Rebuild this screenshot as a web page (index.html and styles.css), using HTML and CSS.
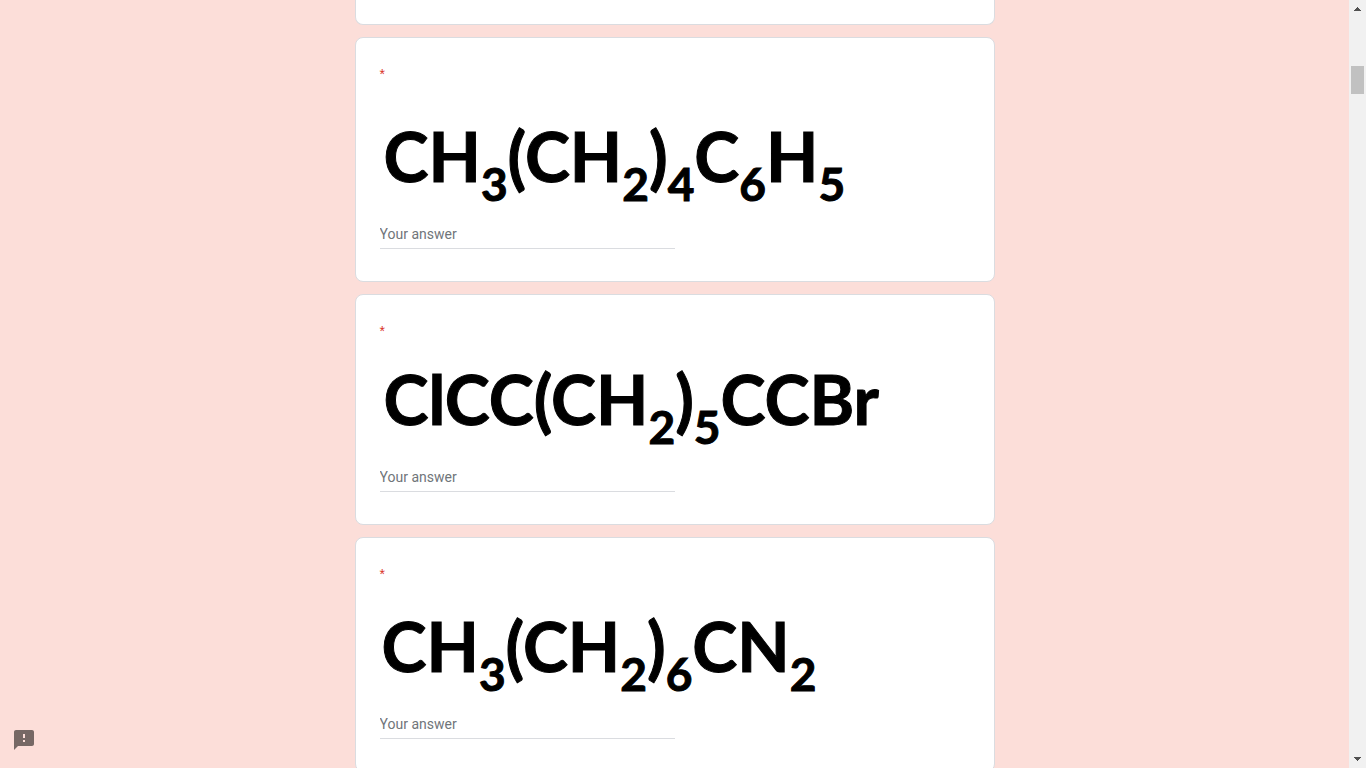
FILE: index.html
```
<!DOCTYPE html>
<html lang="en">

<head>
    <meta charset="UTF-8">
    <meta name="viewport" content="width=device-width, initial-scale=1.0">
    <title>Form</title>
    <link rel="stylesheet" href="styles.css">
</head>

<body>
    <div class="page">
        <main class="form">
            <!-- end of the previous question -->
            <section class="card card-prev"></section>

            <section class="card">
                <label class="required" for="answer1">*</label>
                <div class="formula formula-tall">
                    <p>CH<sub>3</sub>(CH<sub>2</sub>)<sub>4</sub>C<sub>6</sub>H<sub>5</sub></p>
                </div>
                <input class="answer" id="answer1" type="text" placeholder="Your answer">
            </section>

            <section class="card">
                <label class="required" for="answer2">*</label>
                <div class="formula">
                    <p>ClCC(CH<sub>2</sub>)<sub>5</sub>CCBr</p>
                </div>
                <input class="answer" id="answer2" type="text" placeholder="Your answer">
            </section>

            <section class="card">
                <label class="required" for="answer3">*</label>
                <div class="formula formula-mid">
                    <p>CH<sub>3</sub>(CH<sub>2</sub>)<sub>6</sub>CN<sub>2</sub></p>
                </div>
                <input class="answer" id="answer3" type="text" placeholder="Your answer">
            </section>
        </main>

        <div class="scrollbar">
            <svg class="arrow" viewBox="0 0 17 17"><path d="M8 7h1v1h1v1h1v1h1v1H5v-1h1V9h1V8h1z" /></svg>
            <div class="track">
                <div class="thumb"></div>
            </div>
            <svg class="arrow" viewBox="0 0 17 17"><path d="M5 6h7v1h-1v1h-1v1H9v1H8V9H7V8H6V7H5z" /></svg>
        </div>
    </div>

    <button class="report" type="button" aria-label="Report a problem">
        <svg viewBox="0 0 24 24"><path d="M20 2H4c-1.100 0-1.990.9-1.990 2L2 22l4-4h14c1.100 0 2-.9 2-2V4c0-1.100-.9-2-2-2zm-7 12h-2v-2h2v2zm0-4h-2V6h2v4z" /></svg>
    </button>
</body>

</html>
```
FILE: styles.css
```
* {
    box-sizing: border-box;
}

body {
    margin: 0;
    background: #fcded9;
    font-family: Roboto, "Liberation Sans", sans-serif;
}

.page {
    display: flex;
    height: 100vh;
    overflow: hidden;
}

.form {
    flex: 1;
    display: flex;
    flex-direction: column;
    align-items: center;
    gap: 12px;
    overflow: hidden;
}

/* question cards */
.card {
    display: flex;
    flex-direction: column;
    flex-shrink: 0;
    width: 100%;
    max-width: 640px;
    padding: 24px 24px 32px;
    background: #fff;
    border: 1px solid #dadce0;
    border-radius: 8px;
}

.card-prev {
    height: 25px;
    padding: 0;
    border-top: 0;
    border-radius: 0 0 8px 8px;
}

.required {
    color: #d93025;
    font: 14px/24px "Liberation Sans", Arial, sans-serif;
}

.formula {
    display: flex;
    align-items: flex-end;
    height: 117px;
    padding-left: 4px;
}

.formula-tall {
    height: 131px;
}

.formula-mid {
    height: 121px;
    padding-left: 2px;
}

.formula p {
    margin: 0 0 21px;
    color: #000;
    font: bold 68px/80px Lato, sans-serif;
    white-space: nowrap;
    -webkit-text-stroke: 1px #000;
}

.formula sub {
    font-size: 46px;
    line-height: 0;
    vertical-align: -19px;
}

.answer {
    width: 50%;
    height: 32px;
    padding: 3px 0 0;
    border: 0;
    border-bottom: 1px solid #dadce0;
    outline: none;
    background: none;
    font: 14px/24px Roboto, "Liberation Sans", sans-serif;
}

.answer::placeholder {
    color: #70757a;
}

/* scrollbar */
.scrollbar {
    display: flex;
    flex-direction: column;
    width: 17px;
    background: #f1f1f1;
}

.arrow {
    width: 17px;
    height: 17px;
    fill: #505050;
}

.track {
    flex: 1;
    padding: 49px 2px 0;
}

.thumb {
    height: 28px;
    background: #c1c1c1;
}

.report {
    position: fixed;
    left: 12px;
    bottom: 16px;
    width: 24px;
    height: 24px;
    padding: 0;
    border: 0;
    background: none;
}

.report svg {
    display: block;
    fill: #766865;
}
```
